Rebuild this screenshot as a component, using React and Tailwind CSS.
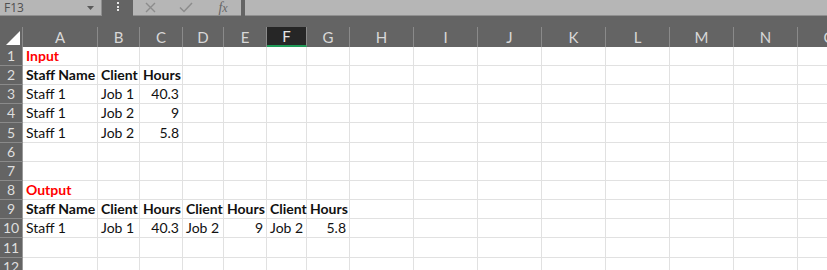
import React from "react";

const COLS = [
  { k: "A", w: "w-[75px]" },
  { k: "B", w: "w-[42px]" },
  { k: "C", w: "w-[43px]" },
  { k: "D", w: "w-[41px]" },
  { k: "E", w: "w-[43px]" },
  { k: "F", w: "w-[40px]" },
  { k: "G", w: "w-[43px]" },
  { k: "H", w: "w-[64px]" },
  { k: "I", w: "w-[64px]" },
  { k: "J", w: "w-[64px]" },
  { k: "K", w: "w-[64px]" },
  { k: "L", w: "w-[64px]" },
  { k: "M", w: "w-[64px]" },
  { k: "N", w: "w-[64px]" },
  { k: "O", w: "w-[64px]" },
];

const B = (t) => ({ t, b: true });
const R = (t) => ({ t, r: true });
const RED = (t) => ({ t, b: true, red: true });

const DATA = {
  1: { A: RED("Input") },
  2: { A: B("Staff Name"), B: B("Client"), C: B("Hours") },
  3: { A: { t: "Staff 1" }, B: { t: "Job 1" }, C: R("40.3") },
  4: { A: { t: "Staff 1" }, B: { t: "Job 2" }, C: R("9") },
  5: { A: { t: "Staff 1" }, B: { t: "Job 2" }, C: R("5.8") },
  8: { A: RED("Output") },
  9: {
    A: B("Staff Name"),
    B: B("Client"),
    C: B("Hours"),
    D: B("Client"),
    E: B("Hours"),
    F: B("Client"),
    G: B("Hours"),
  },
  10: {
    A: { t: "Staff 1" },
    B: { t: "Job 1" },
    C: R("40.3"),
    D: { t: "Job 2" },
    E: R("9"),
    F: { t: "Job 2" },
    G: R("5.8"),
  },
};

const ROW_H = {
  1: "h-[19px]",
  2: "h-[19px]",
  3: "h-[19px]",
  4: "h-[19px]",
  5: "h-[20px]",
  6: "h-[19px]",
  7: "h-[19px]",
  8: "h-[19px]",
  9: "h-[19px]",
  10: "h-[19px]",
  11: "h-[20px]",
  12: "h-[19px]",
};

function Cell({ col, v }) {
  let cls =
    "shrink-0 border-r border-b border-[#e1e1e1] flex items-center px-[3px] whitespace-nowrap overflow-visible text-[14px] leading-none " +
    col.w;
  if (v && v.r) cls += " justify-end";
  let tcls = "text-[#111]";
  if (v && v.b) tcls += " font-bold";
  if (v && v.red) tcls = "font-bold text-[#ff0000]";
  return (
    <div className={cls}>
      {v ? <span className={tcls}>{v.t}</span> : null}
    </div>
  );
}

export default function App() {
  const rows = [1, 2, 3, 4, 5, 6, 7, 8, 9, 10, 11, 12];
  return (
    <div className="w-[827px] h-[270px] overflow-hidden bg-white font-['Lato',sans-serif]">
      {/* top toolbar */}
      <div className="h-[27px] bg-[#646464] flex items-start">
        <div className="w-[102px] h-[16px] bg-[#b6b6b6] border-r border-b border-[#8f8f8f] flex items-center justify-between pl-[4px] pr-[7px]">
          <span className="text-[12px] leading-[14px] text-[#505050] font-['Open_Sans',sans-serif]">F13</span>
          <svg width="7" height="4" viewBox="0 0 7 4">
            <path d="M0 0 L7 0 L3.5 4 Z" fill="#5a5a5a" />
          </svg>
        </div>
        <div className="w-[31px] h-[12px] flex flex-col items-center justify-center gap-[1.5px] pt-[1px]">
          <div className="w-[2px] h-[2px] bg-[#e6e6e6]" />
          <div className="w-[2px] h-[2px] bg-[#e6e6e6]" />
          <div className="w-[2px] h-[2px] bg-[#e6e6e6]" />
        </div>
        <div className="w-[108px] h-[16px] bg-[#b6b6b6] border-b border-[#8f8f8f] flex items-center">
          <div className="w-[34px] flex justify-center pl-[1px]">
            <svg width="11" height="11" viewBox="0 0 11 11">
              <path d="M1 1 L10 10 M10 1 L1 10" stroke="#8c8c8c" strokeWidth="1.4" />
            </svg>
          </div>
          <div className="w-[38px] flex justify-center">
            <svg width="14" height="11" viewBox="0 0 14 11">
              <path d="M1 5.5 L5 9.5 L13 1" stroke="#8c8c8c" strokeWidth="1.5" fill="none" />
            </svg>
          </div>
          <div className="w-[36px] flex justify-center">
            <span className="font-['Liberation_Serif',serif] italic text-[14px] leading-[15px] text-[#666666]">
              f<span className="text-[12px]">x</span>
            </span>
          </div>
        </div>
        <div className="ml-[4px] flex-1 h-[16px] bg-[#b6b6b6] border-b border-[#8f8f8f]" />
      </div>

      {/* column headers */}
      <div className="flex h-[20px] bg-[#646464]">
        <div className="w-[23px] shrink-0 border-r border-[#8a8a8a] relative">
          <svg className="absolute right-[2px] bottom-[2px]" width="14" height="14" viewBox="0 0 14 14">
            <path d="M14 0 L14 14 L0 14 Z" fill="#ffffff" />
          </svg>
        </div>
        {COLS.map((c) =>
          c.k === "F" ? (
            <div
              key={c.k}
              className={
                "shrink-0 bg-[#262626] border-b-2 border-[#1f9a57] border-r border-r-[#8a8a8a] flex items-center justify-center text-[15px] leading-none text-[#e4e4e4] pt-[1px] " +
                c.w
              }
            >
              {c.k}
            </div>
          ) : (
            <div
              key={c.k}
              className={
                "shrink-0 border-r border-[#8a8a8a] flex items-center justify-center text-[15px] leading-none text-[#d8d8d8] " +
                c.w
              }
            >
              {c.k}
            </div>
          )
        )}
      </div>

      {/* rows */}
      {rows.map((r) => (
        <div key={r} className={"flex " + ROW_H[r]}>
          <div className="w-[23px] shrink-0 bg-[#646464] border-b border-[#8a8a8a] border-r border-r-[#9a9a9a] flex items-center justify-center text-[14px] leading-none text-[#dedede]">
            {r}
          </div>
          {COLS.map((c) => (
            <Cell key={c.k} col={c} v={DATA[r] ? DATA[r][c.k] : null} />
          ))}
        </div>
      ))}
    </div>
  );
}
